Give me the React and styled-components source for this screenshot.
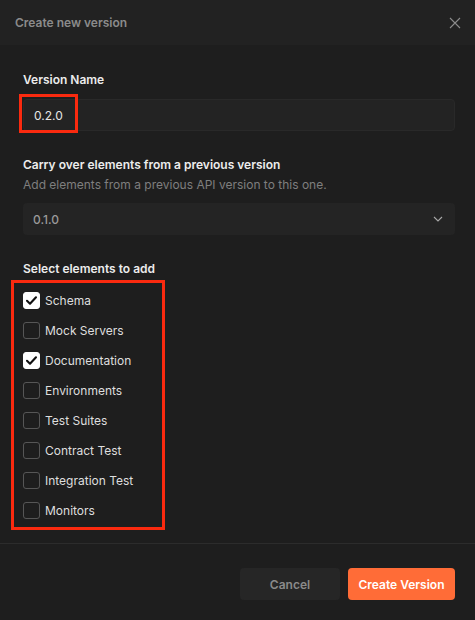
import { useState } from 'react';
import styled, { createGlobalStyle } from 'styled-components';

const GlobalStyle = createGlobalStyle`
  html, body {
    margin: 0;
    padding: 0;
    background: #1e1e1e;
  }
  body {
    font-family: Inter, "Noto Sans", "Liberation Sans", sans-serif;
    -webkit-font-smoothing: antialiased;
  }
`

const Modal = styled.div`
  width: 475px;
  height: 620px;
  background: #1e1e1e;
  display: flex;
  flex-direction: column;
`

const Header = styled.div`
  height: 45px;
  background: #222222;
  display: flex;
  align-items: center;
  justify-content: space-between;
  padding: 0 14px 0 15px;
  box-sizing: border-box;
`

const HeaderTitle = styled.div`
  font-size: 12px;
  font-weight: 600;
  color: #8b8b8b;
`

const CloseButton = styled.button`
  background: transparent;
  border: none;
  padding: 0;
  width: 12px;
  height: 12px;
  display: flex;
  align-items: center;
  justify-content: center;
  cursor: pointer;
`

const Body = styled.div`
  flex: 1;
  padding: 25px 20px 0 23px;
  display: flex;
  flex-direction: column;
`

const Section = styled.div`
  display: flex;
  flex-direction: column;
  margin-top: ${(p) => p.$top || 0}px;
`

const Label = styled.div`
  font-size: 12px;
  font-weight: 600;
  line-height: 20px;
  color: #ececec;
`

const Hint = styled.div`
  font-size: 12px;
  line-height: 20px;
  color: #7f7f7f;
`

const FieldWrap = styled.div`
  position: relative;
  margin-top: ${(p) => p.$top}px;
`

const TextInput = styled.input`
  width: 100%;
  box-sizing: border-box;
  height: 32px;
  background: #232323;
  border: 1px solid #292929;
  border-radius: 4px;
  padding: 0 10px;
  font-family: inherit;
  font-size: 12px;
  color: #e6e6e6;
  outline: none;
`

const Highlight = styled.div`
  position: absolute;
  left: -4px;
  top: -5px;
  width: 59px;
  height: 39px;
  box-sizing: border-box;
  border: 3px solid #fa2a0f;
  pointer-events: none;
`

const Select = styled.div`
  height: 32px;
  box-sizing: border-box;
  background: #242424;
  border-radius: 4px;
  padding: 0 12px 0 10px;
  display: flex;
  align-items: center;
  justify-content: space-between;
  font-size: 12px;
  font-weight: 500;
  color: #9a9a9a;
`

const CheckList = styled.div`
  margin: 1px 0 0 -12px;
  width: 154px;
  height: 250px;
  box-sizing: border-box;
  border: 3px solid #fa2a0f;
  padding: 2px 0 0 9px;
  display: flex;
  flex-direction: column;
`

const CheckRow = styled.label`
  height: 30px;
  display: flex;
  align-items: center;
  gap: 5px;
  font-size: 12px;
  color: #dedede;
  cursor: pointer;
`

const Box = styled.span`
  width: 17px;
  height: 17px;
  box-sizing: border-box;
  border-radius: 3px;
  border: 1px solid ${(p) => (p.$checked ? '#ffffff' : '#565656')};
  background: ${(p) => (p.$checked ? '#ffffff' : 'transparent')};
  display: flex;
  align-items: center;
  justify-content: center;
`

const Footer = styled.div`
  margin-top: 13px;
  border-top: 1px solid #2c2c2c;
  padding: 24px 20px 20px;
  display: flex;
  justify-content: flex-end;
  gap: 8px;
`

const Button = styled.button`
  height: 32px;
  border: none;
  border-radius: 4px;
  font-family: inherit;
  font-size: 12px;
  font-weight: 600;
  cursor: pointer;
  background: ${(p) => (p.$primary ? '#ff6c37' : '#262626')};
  color: ${(p) => (p.$primary ? '#ffffff' : '#8a8a8a')};
  width: ${(p) => (p.$primary ? '107px' : '100px')};
`

const items = [
  'Schema',
  'Mock Servers',
  'Documentation',
  'Environments',
  'Test Suites',
  'Contract Test',
  'Integration Test',
  'Monitors',
]

function Check() {
  return (
    <svg width="13" height="13" viewBox="0 0 13 13" fill="none">
      <path d="M2 6.8 L5 9.7 L11 3.3" stroke="#111" strokeWidth="2.1" strokeLinecap="round" strokeLinejoin="round" />
    </svg>
  )
}

export default function App() {
  const [checked, setChecked] = useState({ Schema: true, Documentation: true })

  const toggle = (name) => {
    setChecked((prev) => ({ ...prev, [name]: !prev[name] }))
  }

  return (
    <Modal>
      <GlobalStyle />
      <Header>
        <HeaderTitle>Create new version</HeaderTitle>
        <CloseButton>
          <svg width="12" height="12" viewBox="0 0 12 12">
            <path d="M1 1 L11 11 M11 1 L1 11" stroke="#8c8c8c" strokeWidth="1.1" />
          </svg>
        </CloseButton>
      </Header>
      <Body>
        <Section>
          <Label>Version Name</Label>
          <FieldWrap $top={9}>
            <TextInput defaultValue="0.2.0" />
            <Highlight />
          </FieldWrap>
        </Section>
        <Section $top={24}>
          <Label>Carry over elements from a previous version</Label>
          <Hint>Add elements from a previous API version to this one.</Hint>
          <FieldWrap $top={8}>
            <Select>
              0.1.0
              <svg width="10" height="6" viewBox="0 0 10 6">
                <path d="M1 1 L5 5 L9 1" stroke="#a8a8a8" strokeWidth="1.1" fill="none" />
              </svg>
            </Select>
          </FieldWrap>
        </Section>
        <Section $top={24}>
          <Label>Select elements to add</Label>
          <CheckList>
            {items.map((name) => (
              <CheckRow key={name} onClick={() => toggle(name)}>
                <Box $checked={!!checked[name]}>{checked[name] && <Check />}</Box>
                {name}
              </CheckRow>
            ))}
          </CheckList>
        </Section>
      </Body>
      <Footer>
        <Button>Cancel</Button>
        <Button $primary>Create Version</Button>
      </Footer>
    </Modal>
  )
}
